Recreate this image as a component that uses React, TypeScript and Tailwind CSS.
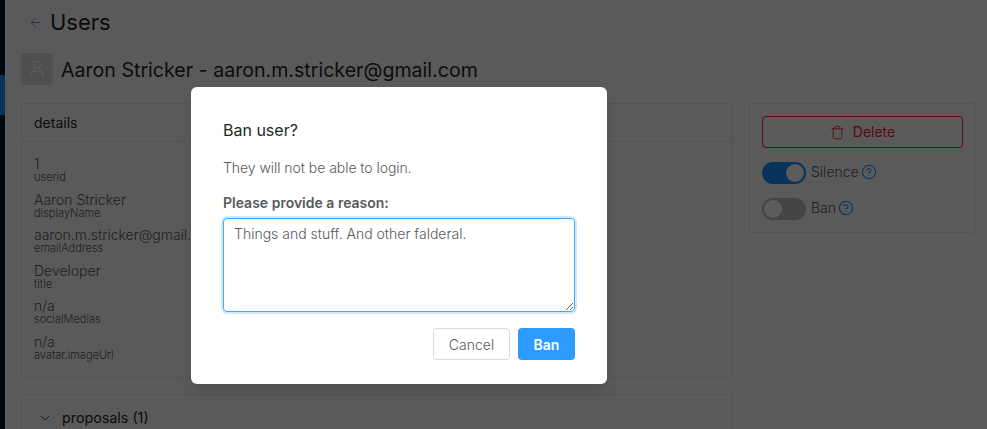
import { ArrowLeft, ChevronDown, CircleHelp, Trash, User } from "lucide-react";

const fields = [
  { value: "1", label: "userid" },
  { value: "Aaron Stricker", label: "displayName" },
  { value: "aaron.m.stricker@gmail.com", label: "emailAddress" },
  { value: "Developer", label: "title" },
  { value: "n/a", label: "socialMedias" },
  { value: "n/a", label: "avatar.imageUrl" },
];

function Toggle({ on, label }: { on: boolean; label: string }) {
  return (
    <div className="flex items-center h-[22px]">
      <div
        className={`w-[44px] h-[22px] rounded-full flex items-center px-[2px] ${
          on ? "bg-[#1890ff] justify-end" : "bg-[#bfbfbf] justify-start"
        }`}
      >
        <div className="w-[18px] h-[18px] rounded-full bg-white" />
      </div>
      <span className="ml-[5px] text-[14px] leading-[20px] font-light text-[#595959] -translate-y-px">{label}</span>
      <CircleHelp className="ml-[2px] w-[16px] h-[16px] text-[#1890ff] -translate-y-px" strokeWidth={1.6} />
    </div>
  );
}

export default function App() {
  return (
    <div className="relative h-[429px] overflow-hidden flex bg-[#fafafa] font-['Inter',sans-serif]">
      <div className="w-[5px] shrink-0 bg-[#001529] pt-[75px]">
        <div className="h-[40px] bg-[#1890ff]" />
      </div>

      <div className="flex-1 pl-[16px] pr-[11px]">
        <div className="flex items-center h-[44px] pl-[7px]">
          <ArrowLeft className="w-[15px] h-[15px] text-[#1890ff]" strokeWidth={1.3} />
          <h1 className="ml-[7px] text-[22px] text-[#1f1f1f]">Users</h1>
        </div>

        <div className="flex items-center mt-[9px] h-[32px]">
          <div className="w-[32px] h-[32px] rounded-[4px] bg-[#dcdcdc] flex items-center justify-center">
            <User className="w-[20px] h-[20px] text-white" strokeWidth={1.4} />
          </div>
          <div className="ml-[8px] mt-[2px] text-[19.6px] leading-[32px] text-[#262626]">
            Aaron Stricker - aaron.m.stricker@gmail.com
          </div>
        </div>

        <div className="flex mt-[18px] gap-[16px]">
          <div className="w-[712px] shrink-0">
            <div className="border border-[#e8e8e8] rounded-[2px] h-[275px]">
              <div className="h-[38px] border-b border-[#e8e8e8] px-[12px] flex items-center text-[14px] text-[#262626]">
                details
              </div>
              <div className="px-[12px] pt-[14px]">
                {fields.map((f) => (
                  <div key={f.label} className="h-[35.5px]">
                    <div className="text-[14px] leading-[15px] font-light text-[#595959]">{f.value}</div>
                    <div className="text-[11px] leading-[12px] font-light text-[#595959]">{f.label}</div>
                  </div>
                ))}
              </div>
            </div>
            <div className="mt-[16px] border border-[#e8e8e8] rounded-[2px] h-[60px] pl-[15px] pt-[14px] flex items-start">
              <ChevronDown className="w-[16px] h-[16px] mt-[1px] text-[#262626]" strokeWidth={1.3} />
              <span className="ml-[9px] text-[14.3px] leading-[18px] text-[#262626]">proposals (1)</span>
            </div>
          </div>

          <div className="w-[227px] h-[130px] border border-[#e8e8e8] rounded-[2px] p-[12px]">
            <button className="w-full h-[32px] border border-[#f5222d] rounded-[4px] flex items-center justify-center text-[14px] leading-[20px] text-[#f5222d]">
              <Trash className="w-[15px] h-[15px] mr-[8px]" strokeWidth={1.5} />
              <span>Delete</span>
            </button>
            <div className="mt-[14px] flex flex-col gap-[14px]">
              <Toggle on label="Silence" />
              <Toggle on={false} label="Ban" />
            </div>
          </div>
        </div>
      </div>

      <div className="absolute inset-0 bg-black/64" />

      <div className="absolute left-[191px] top-[87px] w-[416px] h-[297px] bg-white rounded-[6px] shadow-lg px-[32px] pt-[32px]">
        <div className="text-[16px] leading-[22px] text-[#262626]">Ban user?</div>
        <p className="mt-[16px] text-[14px] leading-[22px] tracking-[-0.05px] text-[#595959] font-light">They will not be able to login.</p>
        <div className="mt-[13px] text-[14px] leading-[22px] font-semibold text-[#595959]">Please provide a reason:</div>
        <textarea
          className="mt-[4px] block w-[352px] h-[94px] border border-[#40a9ff] rounded-[4px] px-[10px] py-[4px] text-[14px] leading-[22px] font-light text-[#595959] outline-none shadow-[0_0_0_2px_rgba(24,144,255,0.2)]"
          defaultValue="Things and stuff. And other falderal."
        />
        <div className="mt-[16px] flex justify-end gap-[8px]">
          <button className="w-[77px] h-[32px] border border-[#d9d9d9] rounded-[4px] bg-white text-[14px] font-light text-[#595959]">
            Cancel
          </button>
          <button className="w-[57px] h-[32px] rounded-[4px] bg-[#2e9bff] text-[14px] font-semibold text-white">
            Ban
          </button>
        </div>
      </div>
    </div>
  );
}
